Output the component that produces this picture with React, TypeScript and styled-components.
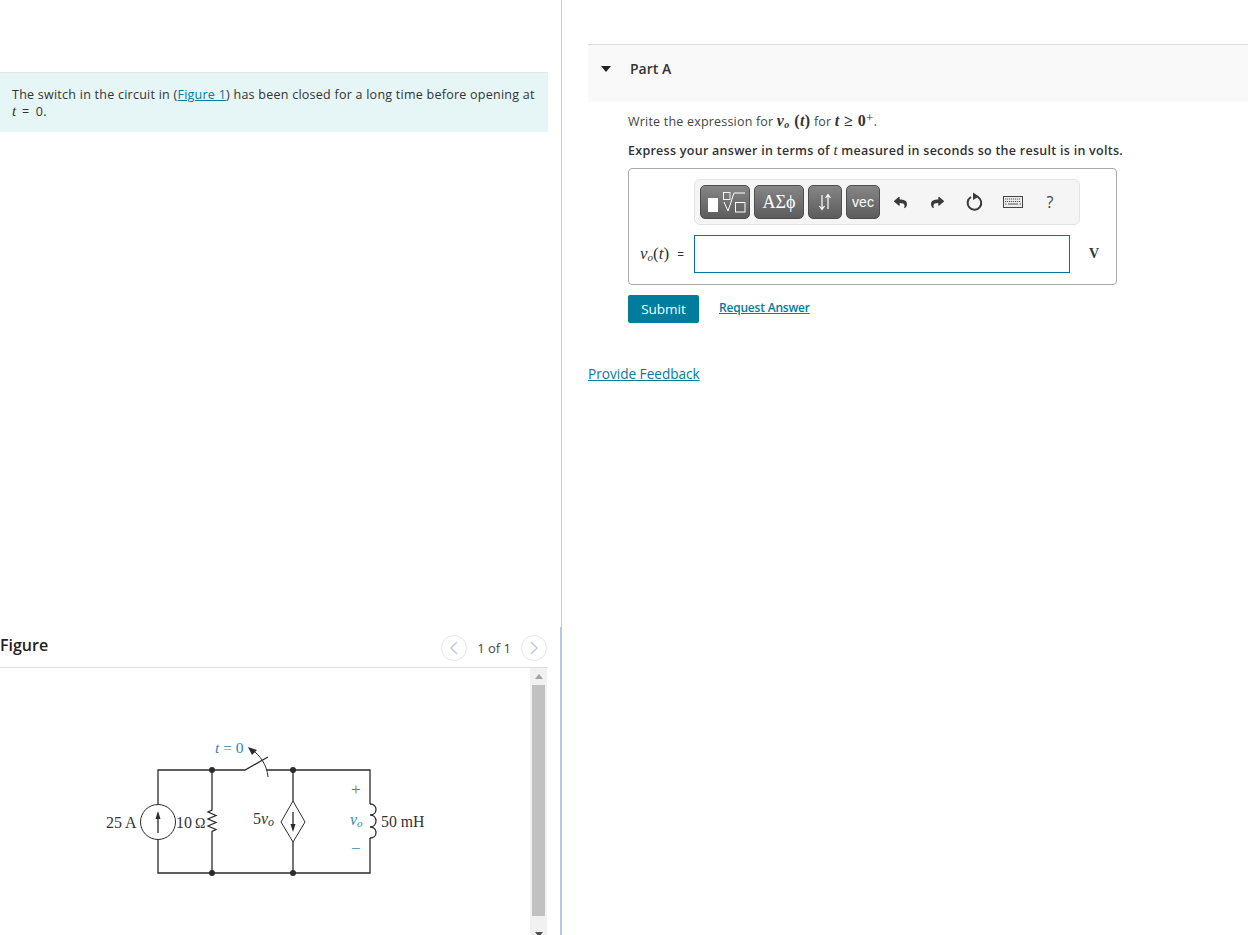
import React from "react";
import styled, { createGlobalStyle } from "styled-components";
import { FaReply, FaShare } from "react-icons/fa";

const Global = createGlobalStyle`
  html, body { margin: 0; padding: 0; height: 935px; overflow: hidden; background: #fff; }
  body { font-family: "Open Sans", "Noto Sans", sans-serif; color: #333; }
`;

const Page = styled.div`display: flex; height: 935px; width: 1248px; overflow: hidden;`;
const LeftColumn = styled.div`width: 562px; flex: none; display: flex; flex-direction: column;`;
const IntroSection = styled.section`height: 627px; padding-top: 72px; box-sizing: border-box; border-right: 1px solid #ccc;`;
const IntroBox = styled.div`
  width: 548px; height: 60px; box-sizing: border-box; padding: 13px 12px 0;
  background: #e6f5f6; border-top: 1px solid #dde6e8;
  font-size: 12.5px; line-height: 17px; color: #333; letter-spacing: .25px;
`;
const Link = styled.a`color: #007c9e; text-decoration: underline;`;
const MathI = styled.i`font-family: "Liberation Serif", serif; font-size: 15px; margin-right: 2px;`;
const Spaced = styled.span`word-spacing: 3px;`;
const FigureSection = styled.section`flex: 1; min-height: 0; border-right: 2px solid #b3c9e3; display: flex; flex-direction: column;`;
const FigureHead = styled.div`
  width: 548px; height: 41px; flex: none; box-sizing: border-box; border-bottom: 1px solid #ddd;
  display: flex; align-items: center; justify-content: space-between;
`;
const FigureTitle = styled.h2`margin: 0 0 4px; font-size: 16px; font-weight: 600; color: #222; line-height: 36px;`;
const Pager = styled.div`display: flex; align-items: center; gap: 10px; padding-right: 1px; margin-top: 1px; font-size: 13px; color: #444;`;
const PagerButton = styled.span`
  width: 26px; height: 26px; box-sizing: border-box; border: 1px solid #e6e6e6; border-radius: 50%;
  display: flex; align-items: center; justify-content: center;
`;
const FigureBody = styled.div`width: 548px; flex: 1; min-height: 0; display: flex;`;
const Canvas = styled.div`width: 530px; flex: none;`;
const Scrollbar = styled.div`
  width: 17px; flex: none; background: #f1f1f1; display: flex; flex-direction: column; align-items: center;
  padding-top: 6px; box-sizing: border-box;
`;
const ScrollArrow = styled.span<{ $down?: boolean }>`
  width: 0; height: 0; flex: none; border-left: 4px solid transparent; border-right: 4px solid transparent;
  ${(p) => (p.$down ? "border-top: 5px solid #505050;" : "border-bottom: 5px solid #a3a3a3;")}
`;
const ScrollThumb = styled.div`width: 13px; height: 231px; flex: none; background: #c1c1c1; margin: 6px 0 16px;`;

const RightColumn = styled.div`flex: 1; min-width: 0; padding: 44px 0 0 26px;`;
const PartHeader = styled.div`
  height: 58px; box-sizing: border-box; background: #f9f9f9; border-top: 1px solid #ddd;
  display: flex; align-items: center; padding: 0 0 10px 13px; gap: 19px;
  font-size: 14px; font-weight: 600; color: #333;
`;
const Caret = styled.span`width: 0; height: 0; border-left: 5.5px solid transparent; border-right: 5.5px solid transparent; border-top: 6px solid #222;`;
const PartBody = styled.div`padding: 10px 0 0 40px; width: 489px;`;
const Prompt = styled.p`margin: 0; font-size: 12.5px; line-height: 18px; color: #444; letter-spacing: .2px; white-space: nowrap;`;
const Instruction = styled.p`margin: 10px 0 0; font-size: 12.5px; line-height: 18px; font-weight: 600; color: #333; letter-spacing: .27px; white-space: nowrap;`;
const MathB = styled.span`
  font-family: "Liberation Serif", serif; font-size: 16px; font-weight: 700; color: #333; letter-spacing: .4px;
  sub { font-size: 10px; line-height: 0; vertical-align: -2px; }
  sup { font-size: 13px; line-height: 0; vertical-align: 4px; font-weight: 400; }
`;
const MathT = styled.i`font-family: "Liberation Serif", serif; font-size: 15px; font-weight: 400;`;
const AnswerBox = styled.div`
  margin-top: 8px; width: 489px; height: 117px; box-sizing: border-box;
  border: 1px solid #aaa; border-radius: 4px; padding: 10px 0 0 11px;
  display: flex; flex-direction: column; gap: 10px;
`;
const ToolbarRow = styled.div`display: flex; padding-left: 54px;`;
const Toolbar = styled.div`
  width: 386px; height: 46px; box-sizing: border-box; background: #f5f5f5; border: 1px solid #e3e3e3; border-radius: 6px;
  display: flex; align-items: center; padding-left: 5px; gap: 4px;
`;
const MathButton = styled.span<{ $w: number }>`
  width: ${(p) => p.$w}px; height: 34px; flex: none; box-sizing: border-box; border: 1px solid #4e4e4e; border-radius: 5px;
  background: linear-gradient(#868686, #5c5c5c); color: #fff;
  display: flex; align-items: center; justify-content: center;
  font-family: "Liberation Serif", serif; font-size: 18px;
  svg { flex: none; }
`;
const VecLabel = styled.span`font-family: "Liberation Sans", sans-serif; font-size: 14px;`;
const ToolIcons = styled.div`display: flex; align-items: center; color: #3a3a3a; margin-left: -2px;`;
const ToolIcon = styled.span`width: 37.3px; flex: none; display: flex; justify-content: center; align-items: center;`;
const Help = styled.span`font-size: 16px; color: #444;`;
const InputRow = styled.div`display: flex; align-items: center;`;
const EqLabel = styled.span`
  width: 54px; flex: none; font-family: "Liberation Serif", serif; font-size: 17px; color: #333; white-space: nowrap;
  i sub { font-size: 11px; line-height: 0; vertical-align: -2px; }
`;
const EqSign = styled.span`font-family: "Open Sans", sans-serif; font-size: 12px; margin-left: 8px;`;
const AnswerInput = styled.div`width: 376px; height: 38px; flex: none; box-sizing: border-box; border: 1px solid #00789c; background: #fff;`;
const Unit = styled.span`margin-left: 19px; font-family: "Liberation Serif", serif; font-size: 14px; font-weight: 700; color: #333;`;
const Actions = styled.div`display: flex; align-items: flex-start; gap: 20px; margin-top: 10px;`;
const Submit = styled.span`
  width: 71px; height: 28px; background: #007c9e; border-radius: 2px; color: #fff; font-size: 13.5px;
  display: flex; align-items: center; justify-content: center;
`;
const RequestLink = styled(Link)`font-size: 12px; font-weight: 600; line-height: 26px; letter-spacing: -.2px;`;
const Feedback = styled(Link)`display: block; margin-top: 41px; font-size: 13.6px; line-height: 20px;`;

const Arrow = ({ left }: { left?: boolean }) => (
  <svg width="10" height="14" viewBox="0 0 10 14" fill="none" stroke="#c3cbd8" strokeWidth="1.6">
    <path d={left ? "M8 1 2 7l6 6" : "M2 1l6 6-6 6"} />
  </svg>
);

const Circuit = () => {
  const ink = "#2b2b2b";
  const blue = "#2f86b8";
  return (
    <svg width="530" height="267" viewBox="0 668 530 267" fontFamily="Liberation Serif, serif" fontSize="16">
      <g fill="none" stroke={ink} strokeWidth="1.3">
        <path d="M158 804V770H245L268 757M267 770H370V804M370 838V873H158V840" />
        <circle cx="158" cy="822" r="17.500" strokeWidth="1" />
        <path d="M158 833V816" />
        <path d="M212 770V810l-4 2 8 3.500-8 3.500 8 3.500-8 3.500 8 3.500-4 2V873" />
        <path d="M293 770V801M293 842V873" />
        <path d="M293 801L305 822 293 842 281 822Z" strokeWidth="1" />
        <path d="M293 812V825" />
        <path d="M370 804c8 0 8 11 0 11 8 0 8 12 0 12 8 0 8 11 0 11" />
        <path d="M268 777C267 765 260 755 252 750" strokeWidth="1" />
      </g>
      <g fill={ink}>
        <circle cx="212" cy="770" r="3" />
        <circle cx="212" cy="873" r="3" />
        <circle cx="293" cy="770" r="3" />
        <circle cx="293" cy="873" r="3" />
        <path d="M158 811l-2.500 8h5Z" />
        <path d="M293 832l-2.500-8h5Z" />
        <path d="M248 747l9 3-5 5Z" />
      </g>
      <g fill={blue}>
        <text x="215" y="753" fontSize="15.500"><tspan fontStyle="italic">t</tspan> = 0</text>
        <text x="351" y="795" fontSize="17">+</text>
        <text x="350" y="825" fontSize="16" fontStyle="italic">v<tspan fontSize="11" dy="2">o</tspan></text>
        <text x="351" y="854" fontSize="17">−</text>
      </g>
      <g fill="#333">
        <text x="106" y="828">25 A</text>
        <text x="176" y="828" wordSpacing="-1">10 <tspan fontSize="14">Ω</tspan></text>
        <text x="253" y="824">5<tspan fontStyle="italic">v</tspan><tspan fontStyle="italic" fontSize="12" dy="2">o</tspan></text>
        <text x="381" y="827" fontSize="15.800">50 mH</text>
      </g>
    </svg>
  );
};

const RootIcon = () => (
  <svg width="50" height="34" viewBox="0 0 50 34" fill="none" stroke="#fff">
    <rect x="8" y="13" width="10" height="14" fill="#fff" stroke="none" />
    <rect x="23.500" y="7.500" width="6.500" height="7" strokeWidth=".9" />
    <path d="M24 17l4 9 6-18h11" strokeWidth="1" />
    <rect x="35.500" y="17.500" width="9.500" height="9.500" strokeWidth="1" />
  </svg>
);
const ArrowsIcon = () => (
  <svg width="18" height="20" viewBox="0 0 18 20" fill="none" stroke="#fff" strokeWidth="1.200">
    <path d="M6 3v14M3.500 14 6 17.500 8.500 14M12 17V3M9.500 6 12 2.500 14.500 6" />
  </svg>
);
const ResetIcon = () => (
  <svg width="18" height="20" viewBox="0 0 18 20" fill="none" stroke="#3a3a3a" strokeWidth="2">
    <path d="M11.500 4.800A6.800 6.800 0 1 1 5 5" />
    <path d="M7 0.500 13 4.500 7 8Z" fill="#3a3a3a" stroke="none" />
  </svg>
);
const KeyboardIcon = () => (
  <svg width="20" height="12" viewBox="0 0 20 12" fill="none">
    <rect x=".5" y=".5" width="19" height="11" fill="#eee" stroke="#444" />
    <path d="M2 3h16M2 5.500h16" stroke="#555" strokeWidth="1.200" strokeDasharray="1.200 .8" />
    <path d="M2 8h1.500M5 8h10M16.500 8H18" stroke="#555" strokeWidth="1.200" />
  </svg>
);

export default function App() {
  return (
    <Page>
      <Global />
      <LeftColumn>
        <IntroSection>
          <IntroBox>
            The switch in the circuit in (<Link>Figure 1</Link>) has been closed for a long time before opening at{" "}
            <MathI>t</MathI> <Spaced>= 0.</Spaced>
          </IntroBox>
        </IntroSection>
        <FigureSection>
          <FigureHead>
            <FigureTitle>Figure</FigureTitle>
            <Pager>
              <PagerButton><Arrow left /></PagerButton>
              <span>1 of 1</span>
              <PagerButton><Arrow /></PagerButton>
            </Pager>
          </FigureHead>
          <FigureBody>
            <Canvas><Circuit /></Canvas>
            <Scrollbar>
              <ScrollArrow />
              <ScrollThumb />
              <ScrollArrow $down />
            </Scrollbar>
          </FigureBody>
        </FigureSection>
      </LeftColumn>
      <RightColumn>
        <PartHeader><Caret />Part A</PartHeader>
        <PartBody>
          <Prompt>
            Write the expression for <MathB><i>v<sub>o</sub></i> (<i>t</i>)</MathB> for <MathB><i>t</i> ≥ 0<sup>+</sup></MathB>.
          </Prompt>
          <Instruction>
            Express your answer in terms of <MathT>t</MathT> measured in seconds so the result is in volts.
          </Instruction>
          <AnswerBox>
            <ToolbarRow>
              <Toolbar>
                <MathButton $w={50}><RootIcon /></MathButton>
                <MathButton $w={50}>ΑΣϕ</MathButton>
                <MathButton $w={34}><ArrowsIcon /></MathButton>
                <MathButton $w={34}><VecLabel>vec</VecLabel></MathButton>
                <ToolIcons>
                  <ToolIcon><FaReply size={13} /></ToolIcon>
                  <ToolIcon><FaShare size={13} /></ToolIcon>
                  <ToolIcon><ResetIcon /></ToolIcon>
                  <ToolIcon><KeyboardIcon /></ToolIcon>
                  <ToolIcon><Help>?</Help></ToolIcon>
                </ToolIcons>
              </Toolbar>
            </ToolbarRow>
            <InputRow>
              <EqLabel><i>v<sub>o</sub></i>(<i>t</i>)<EqSign>=</EqSign></EqLabel>
              <AnswerInput />
              <Unit>V</Unit>
            </InputRow>
          </AnswerBox>
          <Actions>
            <Submit>Submit</Submit>
            <RequestLink>Request Answer</RequestLink>
          </Actions>
        </PartBody>
        <Feedback>Provide Feedback</Feedback>
      </RightColumn>
    </Page>
  );
}
